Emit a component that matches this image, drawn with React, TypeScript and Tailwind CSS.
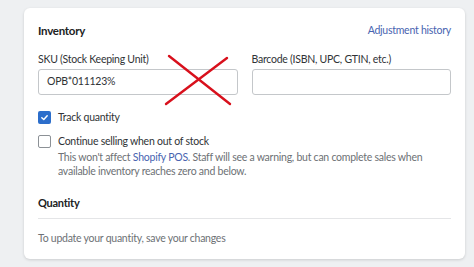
import React from 'react';

export default function App() {
  return (
    <div className="w-[474px] h-[267px] bg-[#eef0f2] pt-2 pl-6 pr-[9px] font-['Lato',sans-serif] tracking-[-0.25px] text-[#303336]">
      <div className="relative bg-white rounded-md shadow-[0_1px_3px_rgba(0,0,0,0.15)] h-[251px] px-[14px] pt-[15px]">
        {/* Header */}
        <div className="flex items-center justify-between h-4">
          <h2 className="text-[11.5px] font-bold text-[#202223]">Inventory</h2>
          <a className="text-[10.5px] text-[#4763b0]">Adjustment history</a>
        </div>

        {/* Fields */}
        <div className="grid grid-cols-2 gap-[14px] mt-[13px]">
          <div>
            <label className="block text-[10.5px] leading-[14px] text-[#303336]">SKU (Stock Keeping Unit)</label>
            <div className="mt-[3px] h-[26px] border border-[#c4c7ca] rounded-[3px] flex items-center px-[8px] text-[10.5px] text-[#303336]">
              OPB*011123%
            </div>
          </div>
          <div>
            <label className="block text-[10.5px] leading-[14px] text-[#303336]">Barcode (ISBN, UPC, GTIN, etc.)</label>
            <div className="mt-[3px] h-[26px] border border-[#c4c7ca] rounded-[3px]" />
          </div>
        </div>

        {/* Checkboxes */}
        <div className="mt-[15px] flex items-center gap-[7px]">
          <div className="w-[13px] h-[13px] rounded-[2px] bg-[#2c6ecb] flex items-center justify-center">
            <svg width="9" height="9" viewBox="0 0 10 10" fill="none">
              <path d="M2 5.2 L4.2 7.3 L8 3" stroke="white" strokeWidth="1.6" strokeLinecap="round" strokeLinejoin="round" />
            </svg>
          </div>
          <span className="text-[10.5px] leading-[14px]">Track quantity</span>
        </div>

        <div className="mt-[10px] flex items-start gap-[7px]">
          <div className="w-[13px] h-[13px] mt-[1px] rounded-[2px] border border-[#8c9196] bg-white shrink-0" />
          <div>
            <div className="text-[10.5px] leading-[14px]">Continue selling when out of stock</div>
            <p className="mt-[2px] text-[10.5px] leading-[14px] text-[#6d7175]">
              This won't affect <span className="text-[#4763b0]">Shopify POS</span>. Staff will see a warning, but can complete sales when available inventory reaches zero and below.
            </p>
          </div>
        </div>

        {/* Quantity */}
        <div className="mt-[18px] text-[11px] font-bold text-[#202223] leading-[14px]">Quantity</div>
        <div className="mt-[8px] border-t border-[#e4e5e7]" />
        <div className="mt-[12px] text-[10.5px] leading-[14px] text-[#6d7175]">To update your quantity, save your changes</div>

        {/* Red cross overlay */}
        <svg className="absolute left-[140px] top-[46px]" width="70" height="54" viewBox="0 0 70 54" fill="none">
          <line x1="5" y1="2" x2="66" y2="50" stroke="#d8101c" strokeWidth="2.4" strokeLinecap="round" />
          <line x1="63" y1="4" x2="2" y2="50" stroke="#d8101c" strokeWidth="2.4" strokeLinecap="round" />
        </svg>
      </div>
    </div>
  );
}
